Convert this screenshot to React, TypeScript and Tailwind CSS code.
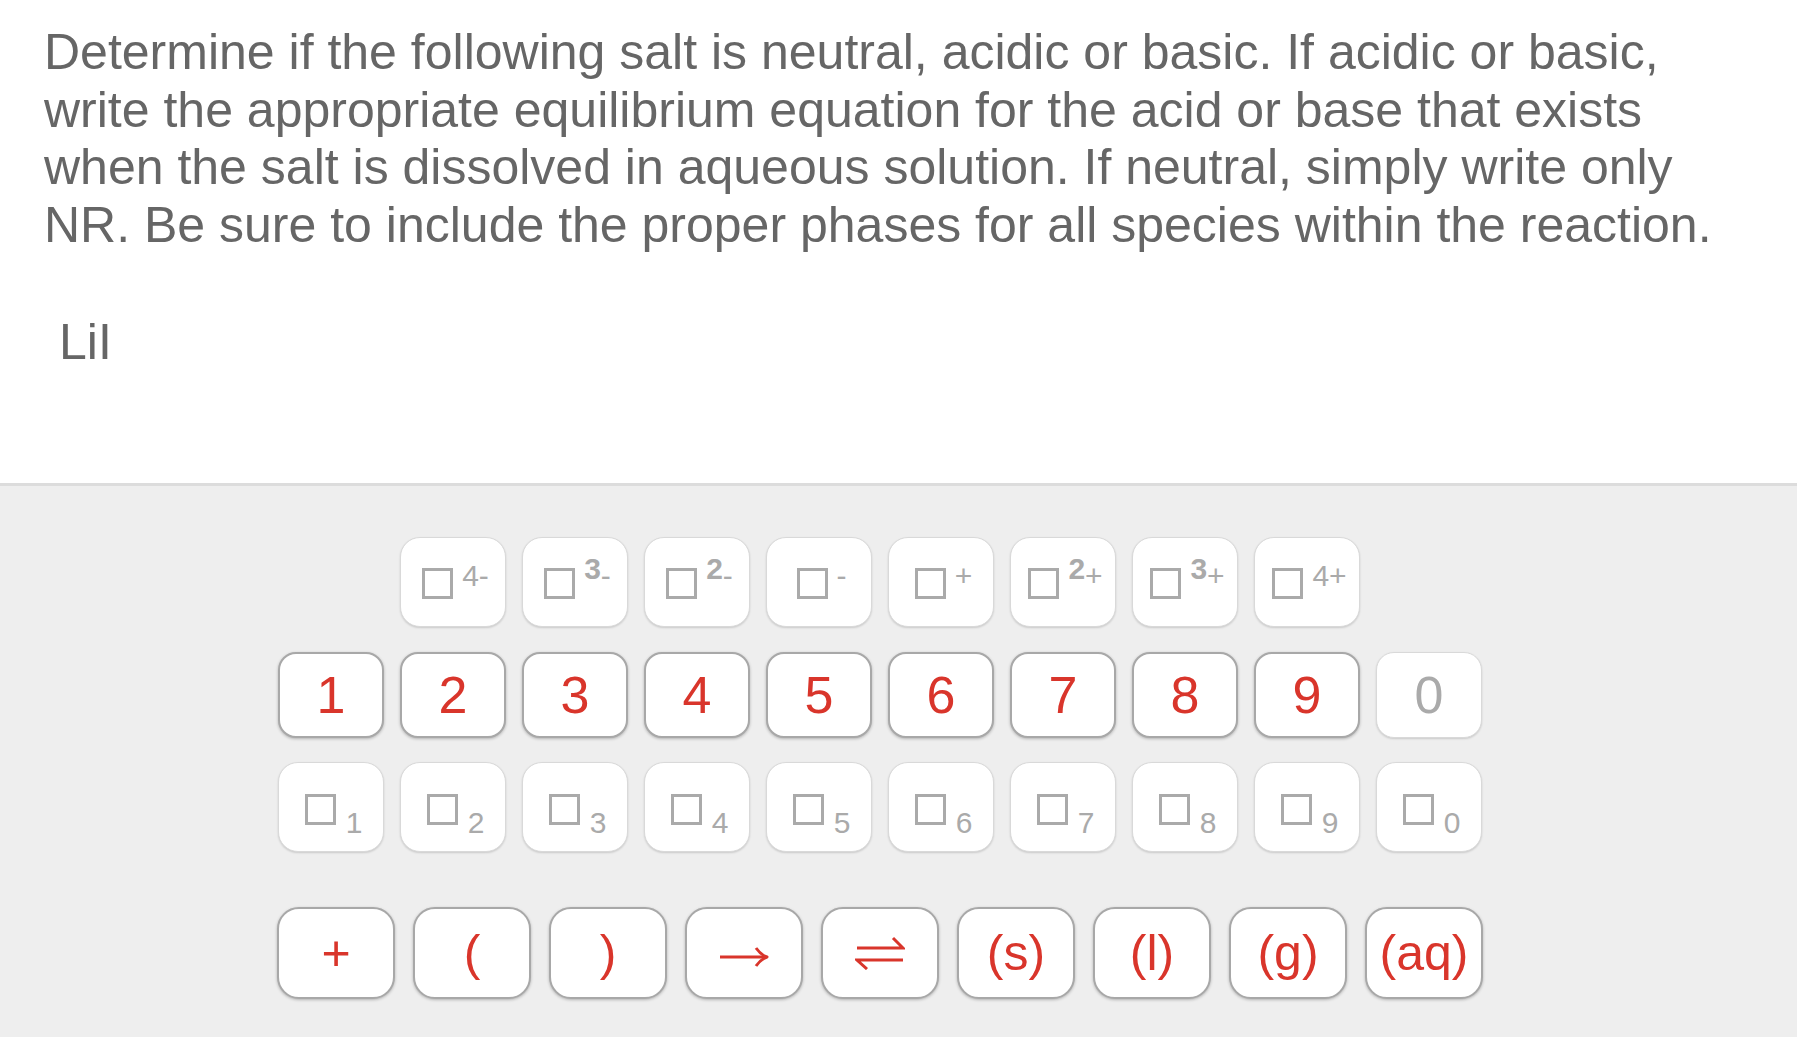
import React from "react";

type Charge = { d: string; b: boolean; s: string };

const charges: Charge[] = [
  { d: "4", b: false, s: "-" },
  { d: "3", b: true, s: "-" },
  { d: "2", b: true, s: "-" },
  { d: "", b: false, s: "-" },
  { d: "", b: false, s: "+" },
  { d: "2", b: true, s: "+" },
  { d: "3", b: true, s: "+" },
  { d: "4", b: false, s: "+" },
];

const digits = ["1", "2", "3", "4", "5", "6", "7", "8", "9", "0"];
const subs = ["1", "2", "3", "4", "5", "6", "7", "8", "9", "0"];

function Square() {
  return <span className="block w-[31px] h-[31px] border-[3px] border-[#aaaaaa] shrink-0" />;
}

function Arrow() {
  return (
    <svg width="50" height="22" viewBox="0 0 50 22" className="mt-[8px]" fill="none">
      <path d="M1 11 H46" stroke="#d9352b" strokeWidth="3.2" />
      <path d="M37 2 Q42 9 48 11 Q42 13 37 20" stroke="#d9352b" strokeWidth="3" strokeLinejoin="round" />
    </svg>
  );
}

function Equil() {
  return (
    <svg width="50" height="34" viewBox="0 0 50 34" fill="none">
      <path d="M2 12 H48 L38 2" stroke="#d9352b" strokeWidth="3" />
      <path d="M48 24 H2 L12 33" stroke="#d9352b" strokeWidth="3" />
    </svg>
  );
}

export default function App() {
  const bottom: React.ReactNode[] = [
    "+",
    "(",
    ")",
    <Arrow key="a" />,
    <Equil key="e" />,
    "(s)",
    "(l)",
    "(g)",
    "(aq)",
  ];
  return (
    <div className="w-full h-[1037px] flex flex-col bg-white overflow-hidden font-['Liberation_Sans',Arial,sans-serif]">
      <div className="h-[483px] shrink-0 pl-[44px] pt-[24px] text-[#666666]">
        <p className="text-[50px] leading-[57.5px] whitespace-nowrap">
          Determine if the following salt is neutral, acidic or basic. If acidic or basic,
          <br />
          write the appropriate equilibrium equation for the acid or base that exists
          <br />
          when the salt is dissolved in aqueous solution. If neutral, simply write only
          <br />
          NR. Be sure to include the proper phases for all species within the reaction.
        </p>
        <div className="mt-[60px] pl-[15px] text-[50px] leading-[57.5px]">LiI</div>
      </div>
      <div className="flex-1 bg-[#eeeeee] border-t-[3px] border-[#dcdcdc] pt-[51px] pl-[278px]">
        <div className="flex gap-[16px] pl-[122px] h-[90px]">
          {charges.map((c, i) => (
            <div
              key={i}
              className="w-[106px] h-[90px] rounded-[20px] bg-white border border-[#d9d9d9] shadow-[0_1px_2px_rgba(0,0,0,0.15)] flex items-start justify-center pl-[5px] pt-[30px]"
            >
              <Square />
              <span className="ml-[9px] mt-[-7px] text-[30px] leading-[30px] text-[#aaaaaa] whitespace-nowrap">
                {c.d && (
                  <span className={c.b ? "relative top-[-7px] font-bold" : ""}>{c.d}</span>
                )}
                {c.s}
              </span>
            </div>
          ))}
        </div>
        <div className="flex gap-[16px] mt-[25px] h-[86px]">
          {digits.map((d) => (
            <div
              key={d}
              className={
                d === "0"
                  ? "w-[106px] h-[86px] rounded-[18px] bg-white border border-[#d9d9d9] shadow-[0_1px_2px_rgba(0,0,0,0.15)] flex items-center justify-center text-[52px] leading-none text-[#aaaaaa]"
                  : "w-[106px] h-[86px] rounded-[18px] bg-white border-2 border-[#a8a8a8] shadow-[0_1px_3px_rgba(0,0,0,0.25)] flex items-center justify-center text-[52px] leading-none text-[#d9352b]"
              }
            >
              {d}
            </div>
          ))}
        </div>
        <div className="flex gap-[16px] mt-[24px] h-[90px]">
          {subs.map((s) => (
            <div
              key={s}
              className="w-[106px] h-[90px] rounded-[20px] bg-white border border-[#d9d9d9] shadow-[0_1px_2px_rgba(0,0,0,0.15)] flex items-start justify-center pl-[5px] pt-[31px]"
            >
              <Square />
              <span className="ml-[10px] mt-[14px] text-[30px] leading-[30px] text-[#aaaaaa]">{s}</span>
            </div>
          ))}
        </div>
        <div className="flex gap-[18px] mt-[55px] ml-[-1px] h-[92px]">
          {bottom.map((b, i) => (
            <div
              key={i}
              className="w-[118px] h-[92px] rounded-[22px] bg-white border-2 border-[#a8a8a8] shadow-[0_1px_3px_rgba(0,0,0,0.25)] flex items-center justify-center text-[50px] leading-none text-[#d9352b]"
            >
              {b}
            </div>
          ))}
        </div>
      </div>
    </div>
  );
}
